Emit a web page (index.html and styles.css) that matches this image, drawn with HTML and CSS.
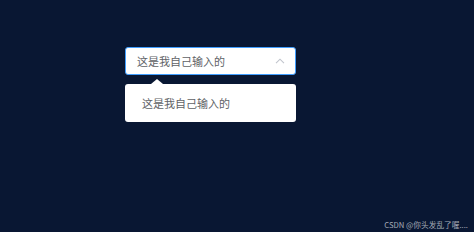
FILE: index.html
```html
<!DOCTYPE html>
<html>
<head>
<meta charset="utf-8">
<link rel="stylesheet" href="styles.css">
</head>
<body>
<div class="page">
  <div class="select">
    <div class="input">
      <span class="value">这是我自己输入的</span>
      <svg class="chev" width="10" height="6" viewBox="0 0 10 6"><path d="M1 5.2 L5 1.2 L9 5.2" fill="none" stroke="#c0c4cc" stroke-width="1.1"/></svg>
    </div>
    <div class="dropdown">
      <span class="arrow"></span>
      <div class="item">这是我自己输入的</div>
    </div>
  </div>
  <div class="footer">CSDN @你头发乱了喔....</div>
</div>
</body>
</html>
```
FILE: styles.css
```css
html, body {
  margin: 0;
  padding: 0;
  background: #091733;
  width: 474px;
  height: 232px;
  overflow: hidden;
  font-family: "Noto Sans CJK SC", "Noto Sans", sans-serif;
}
.page {
  width: 474px;
  height: 232px;
  display: flex;
  flex-direction: column;
  box-sizing: border-box;
  padding: 47px 0 0 125px;
}
.select {
  width: 171px;
  display: flex;
  flex-direction: column;
}
.input {
  height: 28px;
  box-sizing: border-box;
  border: 1px solid #409eff;
  border-radius: 3px;
  background: #fff;
  display: flex;
  align-items: center;
  justify-content: space-between;
  padding: 0 10px 0 11px;
}
.value {
  font-size: 11px;
  color: #606266;
  line-height: 1;
}
.chev {
  display: block;
}
.dropdown {
  position: relative;
  margin-top: 9px;
  height: 38px;
  background: #fff;
  border-radius: 3px;
  display: flex;
  align-items: center;
  padding-left: 17px;
}
.arrow {
  position: absolute;
  left: 26px;
  top: -5px;
  width: 0;
  height: 0;
  border-left: 6px solid transparent;
  border-right: 6px solid transparent;
  border-bottom: 5px solid #fff;
}
.item {
  font-size: 11px;
  color: #606266;
  line-height: 1;
  margin-top: 1px;
}
.footer {
  margin-top: auto;
  align-self: flex-end;
  margin-right: 6px;
  margin-bottom: 2px;
  font-size: 7.7px;
  color: #a4aab6;
  font-family: "Noto Sans CJK SC", "Liberation Sans", sans-serif;
}
```
